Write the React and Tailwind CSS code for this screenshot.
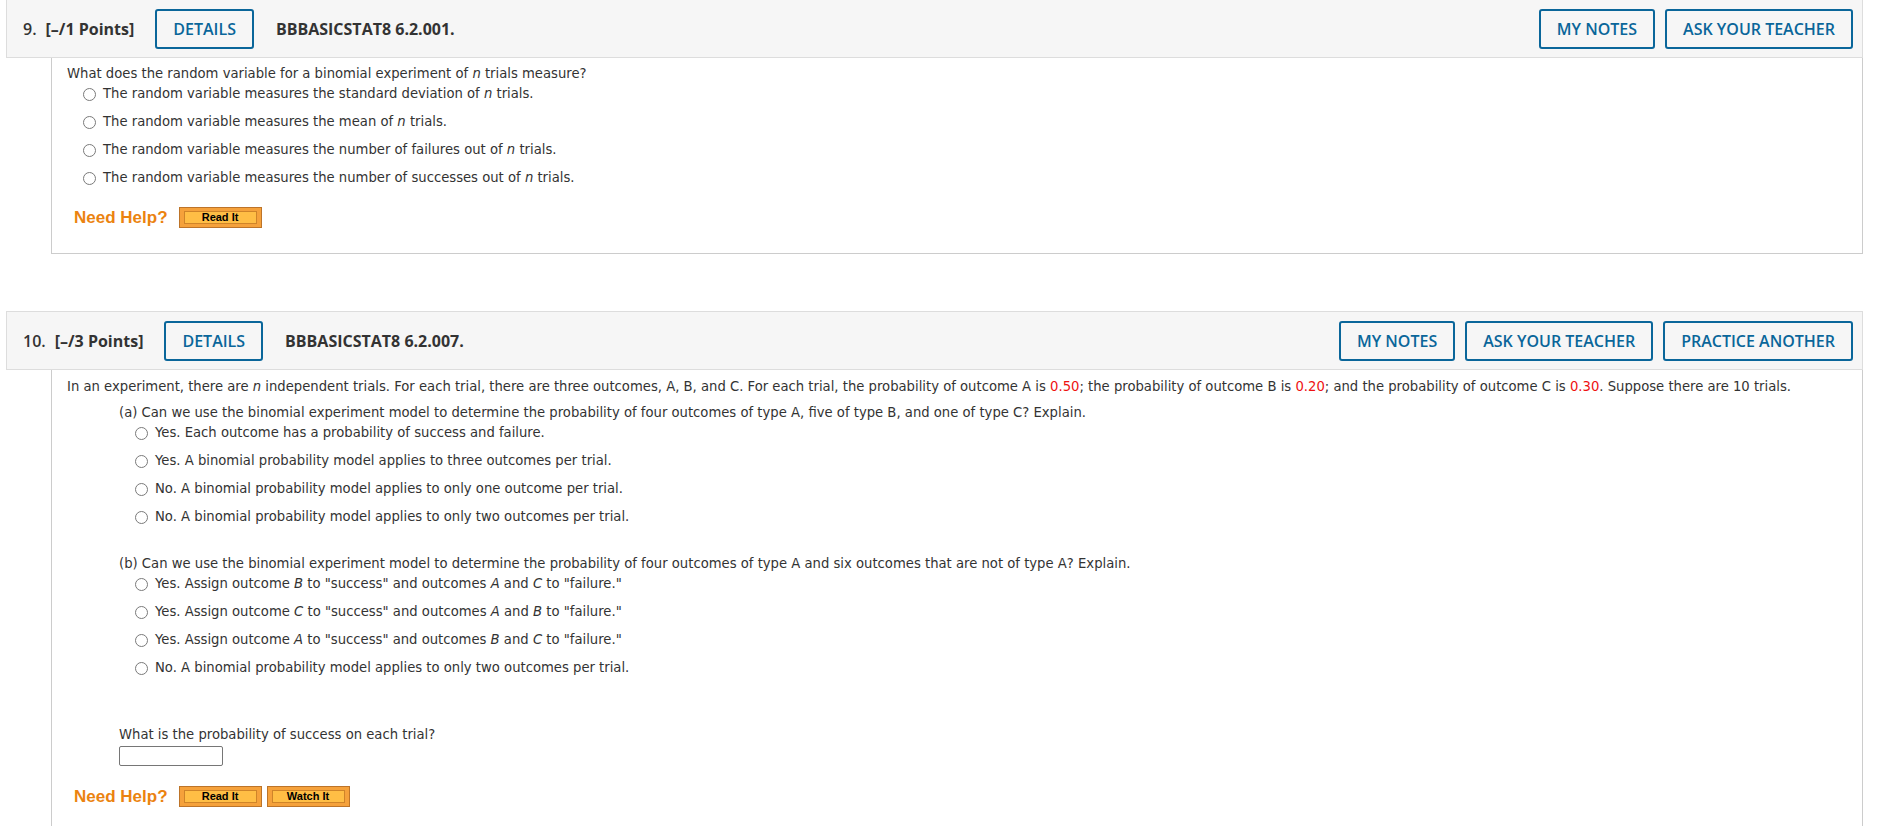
import React from 'react';

const Radio = () => (
  <span className="inline-block h-[13px] w-[13px] shrink-0 rounded-full border border-[#7a7a7a] bg-white" />
);

const Option = ({ children }) => (
  <div className="flex h-[20px] items-center gap-[7px]">
    <Radio />
    <span>{children}</span>
  </div>
);

const Options = ({ items }) => (
  <div className="flex flex-col gap-[8px] pl-[16px]">
    {items.map((item, idx) => (
      <Option key={idx}>{item}</Option>
    ))}
  </div>
);

const HeadButton = ({ children, className = '' }) => (
  <button
    className={`flex h-[40px] items-center rounded-[3px] border-2 border-[#0a669a] px-[16px] font-semibold text-[#0a669a] ${className}`}
  >
    {children}
  </button>
);

const HelpButton = ({ children }) => (
  <span className="flex h-[21px] w-[83px] border border-[#bd7429] bg-[#f5a13b] px-[4px] py-[3px]">
    <span className="flex h-full w-full items-center justify-center border border-[#cf8429] bg-[#ffbe45] font-[family-name:'Liberation_Sans',Arial,sans-serif] text-[11px] font-bold leading-none text-black">
      {children}
    </span>
  </span>
);

const NeedHelp = ({ buttons }) => (
  <div className="flex h-[21px] items-center pl-[7px]">
    <span className="font-[family-name:'Liberation_Sans',Arial,sans-serif] text-[17px] font-bold text-[#eb8310]">
      Need Help?
    </span>
    <div className="ml-[11px] flex gap-[5px]">
      {buttons.map((b) => (
        <HelpButton key={b}>{b}</HelpButton>
      ))}
    </div>
  </div>
);

const Header = ({ num, points, code, buttons, className = '' }) => (
  <div
    className={`flex h-[59px] items-center justify-between border border-[#dddddd] bg-[#f6f6f6] pl-[16px] pr-[9px] font-[family-name:'Open_Sans',sans-serif] text-[16px] text-[#333] ${className}`}
  >
    <div className="flex items-center">
      <span className="font-semibold">{num}</span>
      <span className="ml-[9px] font-bold">{points}</span>
      <HeadButton className="ml-[21px]">DETAILS</HeadButton>
      <span className="ml-[22px] font-bold">{code}</span>
    </div>
    <div className="flex gap-[10px]">
      {buttons.map((b) => (
        <HeadButton key={b}>{b}</HeadButton>
      ))}
    </div>
  </div>
);

const Red = ({ children }) => <span className="text-[#ee1111]">{children}</span>;

export default function App() {
  return (
    <div className="min-h-screen bg-white pl-[6px] pr-[15px] font-[family-name:'DejaVu_Sans',Verdana,sans-serif] text-[13.2px] leading-[20px] text-[#333]">
      {/* Question 9 */}
      <Header
        className="-mt-px"
        num="9."
        points="[–/1 Points]"
        code="BBBASICSTAT8 6.2.001."
        buttons={['MY NOTES', 'ASK YOUR TEACHER']}
      />
      <div className="ml-[45px] border-x border-b border-[#cccccc] pb-[25px] pl-[15px] pt-[6px]">
        <div>
          What does the random variable for a binomial experiment of <i>n</i> trials measure?
        </div>
        <Options
          items={[
            <>The random variable measures the standard deviation of <i>n</i> trials.</>,
            <>The random variable measures the mean of <i>n</i> trials.</>,
            <>The random variable measures the number of failures out of <i>n</i> trials.</>,
            <>The random variable measures the number of successes out of <i>n</i> trials.</>,
          ]}
        />
        <div className="mt-[19px]">
          <NeedHelp buttons={['Read It']} />
        </div>
      </div>

      {/* Question 10 */}
      <Header
        className="mt-[57px]"
        num="10."
        points="[–/3 Points]"
        code="BBBASICSTAT8 6.2.007."
        buttons={['MY NOTES', 'ASK YOUR TEACHER', 'PRACTICE ANOTHER']}
      />
      <div className="ml-[45px] min-h-[456px] border-x border-[#cccccc] pl-[15px] pt-[7px]">
        <div>
          In an experiment, there are <i>n</i> independent trials. For each trial, there are three outcomes, A, B, and C. For
          each trial, the probability of outcome A is <Red>0.50</Red>; the probability of outcome B is <Red>0.20</Red>; and
          the probability of outcome C is <Red>0.30</Red>. Suppose there are 10 trials.
        </div>

        <div className="mt-[6px] pl-[52px]">
          <div>
            (a) Can we use the binomial experiment model to determine the probability of four outcomes of type A, five of type
            B, and one of type C? Explain.
          </div>
          <Options
            items={[
              'Yes. Each outcome has a probability of success and failure.',
              'Yes. A binomial probability model applies to three outcomes per trial.',
              'No. A binomial probability model applies to only one outcome per trial.',
              'No. A binomial probability model applies to only two outcomes per trial.',
            ]}
          />

          <div className="mt-[27px]">
            (b) Can we use the binomial experiment model to determine the probability of four outcomes of type A and six
            outcomes that are not of type A? Explain.
          </div>
          <Options
            items={[
              <>Yes. Assign outcome <i>B</i> to "success" and outcomes <i>A</i> and <i>C</i> to "failure."</>,
              <>Yes. Assign outcome <i>C</i> to "success" and outcomes <i>A</i> and <i>B</i> to "failure."</>,
              <>Yes. Assign outcome <i>A</i> to "success" and outcomes <i>B</i> and <i>C</i> to "failure."</>,
              'No. A binomial probability model applies to only two outcomes per trial.',
            ]}
          />

          <div className="mt-[47px]">What is the probability of success on each trial?</div>
          <input
            type="text"
            className="mt-px block h-[20px] w-[104px] rounded-[2px] border border-[#767676] bg-white"
          />
        </div>

        <div className="mt-[20px]">
          <NeedHelp buttons={['Read It', 'Watch It']} />
        </div>
      </div>
    </div>
  );
}
